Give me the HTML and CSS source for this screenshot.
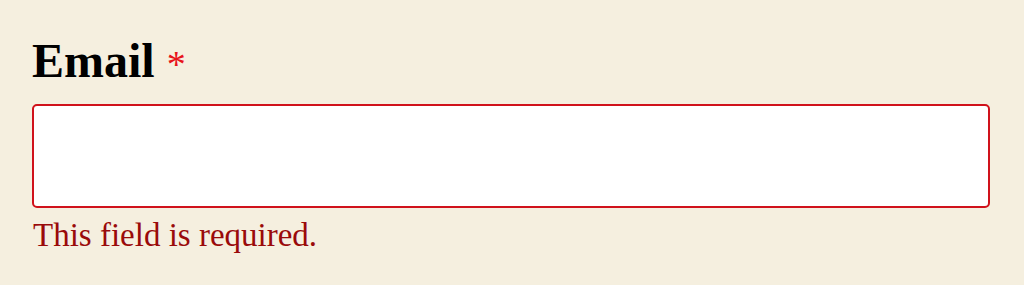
FILE: index.html
```html
<!DOCTYPE html>
<html>
	<head>
		<link rel="stylesheet" href="styles.css">
	</head>
	<body>
	<div class="field">
		<label class="label" for="email">Email <span class="req">*</span></label>
		<input class="input" id="email" type="email">
		<p class="error">This field is required.</p>
	</div>
	</body>
</html>
```
FILE: styles.css
```css
body{
	margin: 0;
	background-color: #f5efdf;
	font-family: "Liberation Serif", "DejaVu Serif", serif;
}
.field{
	padding: 31px 35px 0 32px;
}
.label{
	display: block;
	font-size: 48px;
	font-weight: bold;
	line-height: 60px;
	color: #000;
	margin-bottom: 10px;
}
.req{
	color: #e8141b;
	font-weight: normal;
	font-size: 38px;
}
.input{
	display: block;
	box-sizing: border-box;
	width: 958px;
	height: 104px;
	margin: 0;
	border: 2px solid #d0121b;
	border-radius: 5px;
	background-color: #fff;
}
.error{
	margin: 7px 0 0 1px;
	font-size: 33px;
	line-height: 40px;
	color: #9a0a0a;
}
```
